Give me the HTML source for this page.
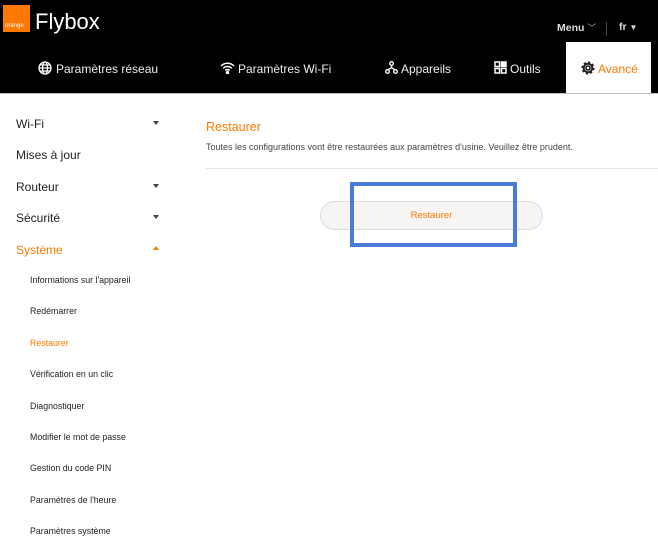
<!DOCTYPE html>
<html><head><meta charset="utf-8"><style>
*{margin:0;padding:0;box-sizing:border-box}
body{width:658px;height:546px;overflow:hidden;background:#fff;font-family:"Liberation Sans",Arial,sans-serif;position:relative}
.hdr{position:absolute;left:0;top:0;width:658px;height:93px;background:#000}
.logo{position:absolute;left:3px;top:5px;width:27px;height:27px;background:#ff7900}
.logo span{position:absolute;left:2px;bottom:3px;font-size:6px;color:#fff}
.fly{position:absolute;left:35px;top:9px;font-size:22px;color:#fff}
.menu{position:absolute;top:21px;font-size:10.5px;font-weight:bold;color:#ddd}
.nav{position:absolute;top:62px;font-size:12px;color:#eee}
.tab{position:absolute;left:566px;top:42px;width:85px;height:52px;background:#fff}
.line{position:absolute;left:0;top:93px;width:658px;height:1px;background:#bbb}
.side{position:absolute;left:16px;font-size:12px;color:#222}
.sub{position:absolute;left:30px;font-size:8.8px;color:#222}
.car{position:absolute;left:153px;width:0;height:0;border-left:3.5px solid transparent;border-right:3.5px solid transparent;border-top:4px solid #444}
</style></head><body>
<div class="hdr"></div>
<div class="logo"><span>orange</span></div>
<div class="fly">Flybox</div>
<div class="menu" style="left:557px">Menu <span style="font-weight:normal;color:#aaa;font-size:9px">﹀</span></div>
<div style="position:absolute;left:606px;top:22px;width:1px;height:14px;background:#444"></div>
<div class="menu" style="left:619px">fr <span style="font-size:8px">▼</span></div>
<svg style="position:absolute;left:38px;top:61px" width="14" height="14" viewBox="0 0 14 14" fill="none" stroke="#fff" stroke-width="1.3"><circle cx="7" cy="7" r="6"/><ellipse cx="7" cy="7" rx="2.5" ry="6"/><path d="M1 7h12M2 4h10M2 10h10"/></svg>
<div class="nav" style="left:56px">Paramètres réseau</div>
<svg style="position:absolute;left:220px;top:61px" width="15" height="13" viewBox="0 0 15 13" fill="none" stroke="#fff" stroke-width="1.5"><path d="M1 5a9 9 0 0 1 13 0M3.2 7.3a6 6 0 0 1 8.6 0M5.3 9.5a3 3 0 0 1 4.4 0"/><circle cx="7.5" cy="11.5" r="1" fill="#fff"/></svg>
<div class="nav" style="left:238px">Paramètres Wi-Fi</div>
<svg style="position:absolute;left:385px;top:61px" width="13" height="13" viewBox="0 0 13 13" fill="none" stroke="#fff" stroke-width="1.3"><circle cx="6.5" cy="2.5" r="1.8"/><circle cx="2.5" cy="10.5" r="1.8"/><circle cx="10.5" cy="10.5" r="1.8"/><path d="M6.5 4.3v2.5M3 8.7L6.5 6.8 10 8.7"/></svg>
<div class="nav" style="left:401px">Appareils</div>
<svg style="position:absolute;left:494px;top:61px" width="13" height="13" viewBox="0 0 13 13" fill="none" stroke="#fff" stroke-width="1.5"><rect x="1" y="1" width="4.5" height="4.5"/><rect x="7.5" y="1" width="4.5" height="4.5" fill="#fff"/><rect x="1" y="7.5" width="4.5" height="4.5"/><rect x="7.5" y="7.5" width="4.5" height="4.5"/></svg>
<div class="nav" style="left:510px">Outils</div>
<div class="tab"></div>
<svg style="position:absolute;left:581px;top:61px" width="14" height="14" viewBox="0 0 14 14" fill="none" stroke="#222"><circle cx="7" cy="7" r="2" stroke-width="1.6"/><circle cx="7" cy="7" r="4.3" stroke-width="2"/><circle cx="7" cy="7" r="5.5" stroke-width="2.2" stroke-dasharray="2 2.3"/></svg>
<div class="nav" style="left:598px;color:#ff7900">Avancé</div>
<div class="line"></div>

<div class="side" style="top:117px">Wi-Fi</div><div class="car" style="top:121px"></div>
<div class="side" style="top:148px">Mises à jour</div>
<div class="side" style="top:180px">Routeur</div><div class="car" style="top:184px"></div>
<div class="side" style="top:211px">Sécurité</div><div class="car" style="top:215px"></div>
<div class="side" style="top:243px;color:#ff7900">Système</div><div class="car" style="top:246px;border-top:none;border-bottom:4px solid #ff7900"></div>
<div class="sub" style="top:275px">Informations sur l'appareil</div>
<div class="sub" style="top:306px">Redémarrer</div>
<div class="sub" style="top:338px;color:#ff7900">Restaurer</div>
<div class="sub" style="top:369px">Vérification en un clic</div>
<div class="sub" style="top:401px">Diagnostiquer</div>
<div class="sub" style="top:432px">Modifier le mot de passe</div>
<div class="sub" style="top:463px">Gestion du code PIN</div>
<div class="sub" style="top:495px">Paramètres de l'heure</div>
<div class="sub" style="top:526px">Paramètres système</div>

<div style="position:absolute;left:206px;top:120px;font-size:12.5px;color:#ff7900">Restaurer</div>
<div style="position:absolute;left:206px;top:142px;font-size:9px;color:#444">Toutes les configurations vont être restaurées aux paramètres d'usine. Veuillez être prudent.</div>
<div style="position:absolute;left:206px;top:168px;width:452px;height:1px;background:#e4e4e4"></div>
<div style="position:absolute;left:320px;top:201px;width:223px;height:29px;border:1px solid #ddd;border-radius:15px;background:#f6f5f3;text-align:center;line-height:27px;font-size:9.5px;color:#ff7900">Restaurer</div>
<div style="position:absolute;left:350px;top:182px;width:167px;height:65px;border:4px solid #4a7bd8"></div>
</body></html>
